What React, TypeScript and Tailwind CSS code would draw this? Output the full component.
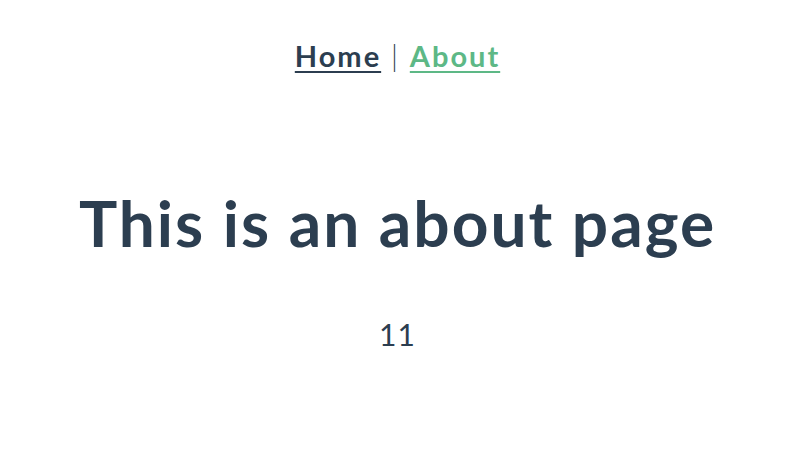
export default function App() {
  return (
    <div className="min-h-[452px] w-[795px] bg-white text-center text-[#2c3e50]" style={{ fontFamily: "Lato, 'Noto Sans', sans-serif" }}>
      <nav className="pt-[36px] text-[29px] font-bold leading-[40px] tracking-[2px]">
        <a href="#" className="text-[#2c3e50] underline underline-offset-[4px] decoration-[2px]">Home</a>
        <span className="font-light"> | </span>
        <a href="#" className="text-[#5db886] underline underline-offset-[4px] decoration-[2px]">About</a>
      </nav>
      <h1 className="mt-[109px] text-[64px] font-bold leading-[76px] tracking-[2px]">This is an about page</h1>
      <p className="mt-[55px] text-[30px] font-normal leading-[36px] tracking-[1px]">11</p>
    </div>
  );
}
